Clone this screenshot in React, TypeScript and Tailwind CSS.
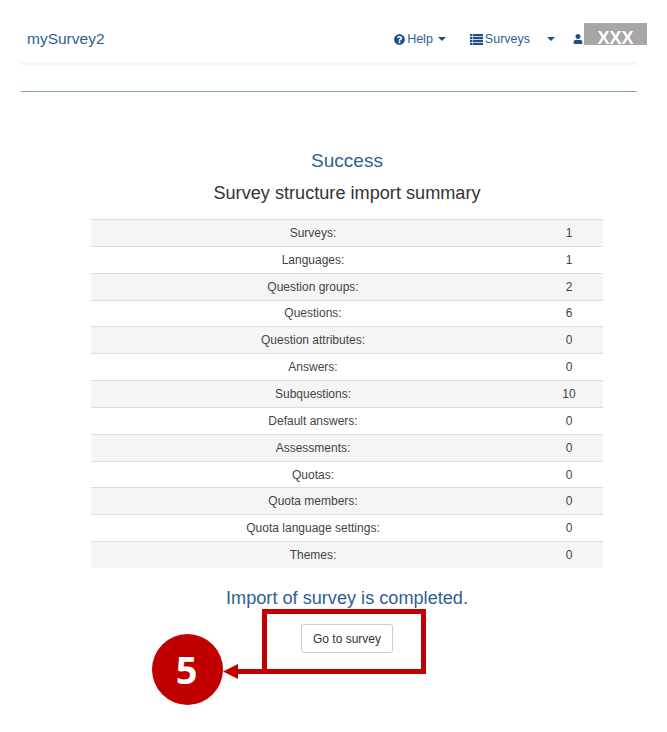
import { FaQuestionCircle, FaUser } from "react-icons/fa";

const rows: [string, number][] = [
  ["Surveys:", 1],
  ["Languages:", 1],
  ["Question groups:", 2],
  ["Questions:", 6],
  ["Question attributes:", 0],
  ["Answers:", 0],
  ["Subquestions:", 10],
  ["Default answers:", 0],
  ["Assessments:", 0],
  ["Quotas:", 0],
  ["Quota members:", 0],
  ["Quota language settings:", 0],
  ["Themes:", 0],
];

function Caret() {
  return <span className="inline-block border-x-[4px] border-t-[4px] border-x-transparent border-t-[#1f4e85]" />;
}

function ListIcon() {
  return (
    <svg className="ml-[24px]" width="13" height="11" viewBox="0 0 13 11" fill="#1f4e85">
      <path d="M0 0h2.4v2.2H0zM3 0h10v2.2H3zM0 2.9h2.4v2.2H0zM3 2.9h10v2.2H3zM0 5.8h2.4V8H0zM3 5.8h10V8H3zM0 8.7h2.4v2.2H0zM3 8.7h10v2.2H3z" />
    </svg>
  );
}

function Navbar() {
  return (
    <div className="flex h-[62px] items-center pt-[15px] text-[#2c5f94]">
      <span className="ml-[6px] text-[15.5px]">mySurvey2</span>
      <div className="ml-auto mt-[1px] flex items-center text-[12.5px]">
        <FaQuestionCircle className="text-[11px] text-[#1f4e85]" />
        <span className="ml-[2px]">Help</span>
        <span className="ml-[5px] flex"><Caret /></span>
        <ListIcon />
        <span className="ml-[2px]">Surveys</span>
        <span className="ml-[17px] flex"><Caret /></span>
        <FaUser className="ml-[18px] text-[10px] text-[#1f4e85]" />
        <span className="w-[54px]" />
      </div>
    </div>
  );
}

export default function App() {
  return (
    <div className="relative h-[732px] w-[667px] overflow-hidden bg-white font-['Liberation_Sans',Arial,sans-serif]">
      <div className="ml-[21px] w-[616px]">
        <Navbar />
        <div className="h-[3px] bg-[#f6f6f6]" />
        <div className="h-[27px] border-b border-[#86a8d8]" />

        <div className="mx-[70px] mt-[57px] w-[512px] text-center">
          <h2 className="text-[19px] leading-[24px] text-[#2c5f94]">Success</h2>
          <h3 className="mt-[8px] text-[18.15px] leading-[24px] text-[#333]">Survey structure import summary</h3>

          <table className="mt-[14px] w-full border-collapse text-[12px] text-[#444]">
            <tbody>
              {rows.map(([label, value], i) => (
                <tr key={label} className={`h-[26.85px] border-t border-[#ddd] ${i % 2 === 0 ? "bg-[#f5f5f5]" : "bg-white"}`}>
                  <td className="w-[444px] p-0 text-center">{label}</td>
                  <td className="p-0 text-center">{value}</td>
                </tr>
              ))}
            </tbody>
          </table>

          <p className="mt-[18px] text-[18.15px] leading-[24px] text-[#2c5f94]">Import of survey is completed.</p>
          <button className="mt-[14px] h-[29px] w-[92px] rounded-[3px] border border-[#ccc] bg-white text-[12px] text-[#333]">
            Go to survey
          </button>
        </div>
      </div>

      {/* masked user name */}
      <div className="absolute left-[584px] top-[23px] flex h-[22px] w-[63px] items-end justify-center bg-[#aaa6a6] text-[18px] font-bold leading-[14px] text-white">
        XXX
      </div>

      {/* callout */}
      <div className="absolute left-[262px] top-[609px] h-[65px] w-[164px] border-[5px] border-[#c00000]" />
      <div className="absolute left-[152px] top-[634px] flex h-[71px] w-[71px] items-center justify-center rounded-full bg-[#c00000] pr-[2px] font-['Open_Sans',sans-serif] text-[38px] font-bold text-white">
        5
      </div>
      <svg className="absolute left-[222px] top-[662px]" width="44" height="19" viewBox="0 0 44 19">
        <path d="M1 9.5 L16 2 L16 7 L44 7 L44 12 L16 12 L16 17 Z" fill="#c00000" />
      </svg>
    </div>
  );
}
